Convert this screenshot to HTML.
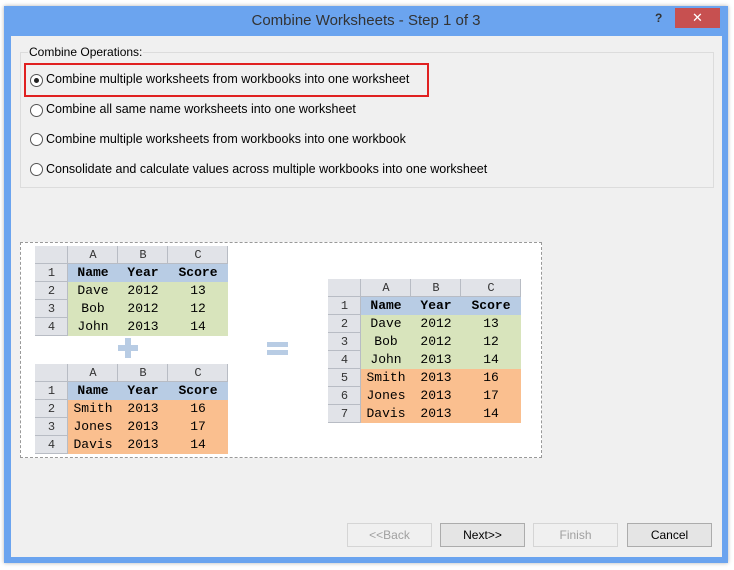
<!DOCTYPE html>
<html><head><meta charset="utf-8"><style>
*{margin:0;padding:0;box-sizing:border-box}
body{width:734px;height:570px;background:#fff;position:relative;overflow:hidden;font-family:"Liberation Sans",sans-serif;font-size:12px;color:#000}
.abs{position:absolute}
#win{left:4px;top:6px;width:724px;height:557px;background:#6ba4ef;box-shadow:0 0 4px rgba(0,0,0,.3)}
#title{left:0;top:0;width:724px;height:30px;text-align:center;line-height:30px;font-size:15px;color:#333}
#client{left:7px;top:30px;width:711px;height:521px;background:#f0f0f0}
.gb{left:20px;top:52px;width:694px;height:136px;border:1px solid #dcdcdc}
.lbl{font-size:12.5px;white-space:nowrap}
.rad{width:13px;height:13px;border:1px solid #555;border-radius:50%;background:#fff}
.rad.on::after{content:"";position:absolute;left:3px;top:3px;width:5px;height:5px;border-radius:50%;background:#222}
#prev{left:20px;top:242px;width:522px;height:216px;background:#fff;border:1px dashed #999}
.t{position:absolute;font-family:"Liberation Mono",monospace;font-size:13px}
.r{display:flex;height:18px}
.r>div{height:18px;line-height:18px;text-align:center}
.c0{width:33px}.c1{width:50px}.c2{width:50px}.c3{width:60px}
.h{background:#e1e3e8;color:#333;box-shadow:inset -1px -1px 0 #b8bcc4;font-size:12px}
.d{background:#b8cce4;font-weight:bold}
.g{background:#d8e4bc}
.o{background:#fabf8f}
.btn{top:523px;width:85px;height:24px;border:1px solid #acacac;background:#e5e5e5;text-align:center;line-height:22px;font-size:12px}
.dis{color:#a0a0a0;border-color:#d5d5d5;background:#f0f0f0}
</style></head><body>
<div id="win" class="abs">
<div id="title" class="abs">Combine Worksheets - Step 1 of 3</div>
<div class="abs" style="left:651px;top:5px;font-size:12px;font-weight:bold;color:#333">?</div>
<div class="abs" style="left:671px;top:2px;width:45px;height:20px;background:#c75050;color:#fff;text-align:center;line-height:19px;font-size:13px">✕</div>
<div id="client" class="abs"></div>
</div>
<div class="abs gb"></div>
<div class="abs lbl" style="left:28px;top:45px;background:#f0f0f0;padding:0 1px;font-size:12px">Combine Operations:</div>
<div class="abs" style="left:24px;top:63px;width:405px;height:34px;border:2px solid #e02020"></div>
<div class="abs rad on" style="left:30px;top:74px"></div><div class="abs lbl" style="left:46px;top:72px">Combine multiple worksheets from workbooks into one worksheet</div>
<div class="abs rad" style="left:30px;top:104px"></div><div class="abs lbl" style="left:46px;top:102px">Combine all same name worksheets into one worksheet</div>
<div class="abs rad" style="left:30px;top:133px"></div><div class="abs lbl" style="left:46px;top:132px">Combine multiple worksheets from workbooks into one workbook</div>
<div class="abs rad" style="left:30px;top:163px"></div><div class="abs lbl" style="left:46px;top:162px">Consolidate and calculate values across multiple workbooks into one worksheet</div>
<div id="prev" class="abs"></div>

<div class="t" style="left:35px;top:246px">
<div class="r"><div class="h c0"></div><div class="h c1">A</div><div class="h c2">B</div><div class="h c3">C</div></div>
<div class="r"><div class="h c0">1</div><div class="d c1">Name</div><div class="d c2">Year</div><div class="d c3">Score</div></div>
<div class="r"><div class="h c0">2</div><div class="g c1">Dave</div><div class="g c2">2012</div><div class="g c3">13</div></div>
<div class="r"><div class="h c0">3</div><div class="g c1">Bob</div><div class="g c2">2012</div><div class="g c3">12</div></div>
<div class="r"><div class="h c0">4</div><div class="g c1">John</div><div class="g c2">2013</div><div class="g c3">14</div></div>
</div>
<div class="abs" style="left:118px;top:345px;width:20px;height:6px;background:#b8cce4"></div>
<div class="abs" style="left:125px;top:338px;width:6px;height:20px;background:#b8cce4"></div>
<div class="t" style="left:35px;top:364px">
<div class="r"><div class="h c0"></div><div class="h c1">A</div><div class="h c2">B</div><div class="h c3">C</div></div>
<div class="r"><div class="h c0">1</div><div class="d c1">Name</div><div class="d c2">Year</div><div class="d c3">Score</div></div>
<div class="r"><div class="h c0">2</div><div class="o c1">Smith</div><div class="o c2">2013</div><div class="o c3">16</div></div>
<div class="r"><div class="h c0">3</div><div class="o c1">Jones</div><div class="o c2">2013</div><div class="o c3">17</div></div>
<div class="r"><div class="h c0">4</div><div class="o c1">Davis</div><div class="o c2">2013</div><div class="o c3">14</div></div>
</div>
<div class="abs" style="left:267px;top:342px;width:21px;height:5px;background:#b8cce4"></div>
<div class="abs" style="left:267px;top:350px;width:21px;height:5px;background:#b8cce4"></div>
<div class="t" style="left:328px;top:279px">
<div class="r"><div class="h c0"></div><div class="h c1">A</div><div class="h c2">B</div><div class="h c3">C</div></div>
<div class="r"><div class="h c0">1</div><div class="d c1">Name</div><div class="d c2">Year</div><div class="d c3">Score</div></div>
<div class="r"><div class="h c0">2</div><div class="g c1">Dave</div><div class="g c2">2012</div><div class="g c3">13</div></div>
<div class="r"><div class="h c0">3</div><div class="g c1">Bob</div><div class="g c2">2012</div><div class="g c3">12</div></div>
<div class="r"><div class="h c0">4</div><div class="g c1">John</div><div class="g c2">2013</div><div class="g c3">14</div></div>
<div class="r"><div class="h c0">5</div><div class="o c1">Smith</div><div class="o c2">2013</div><div class="o c3">16</div></div>
<div class="r"><div class="h c0">6</div><div class="o c1">Jones</div><div class="o c2">2013</div><div class="o c3">17</div></div>
<div class="r"><div class="h c0">7</div><div class="o c1">Davis</div><div class="o c2">2013</div><div class="o c3">14</div></div>
</div>

<div class="abs btn dis" style="left:347px">&lt;&lt;Back</div>
<div class="abs btn" style="left:440px">Next&gt;&gt;</div>
<div class="abs btn dis" style="left:533px">Finish</div>
<div class="abs btn" style="left:627px">Cancel</div>
</body></html>
